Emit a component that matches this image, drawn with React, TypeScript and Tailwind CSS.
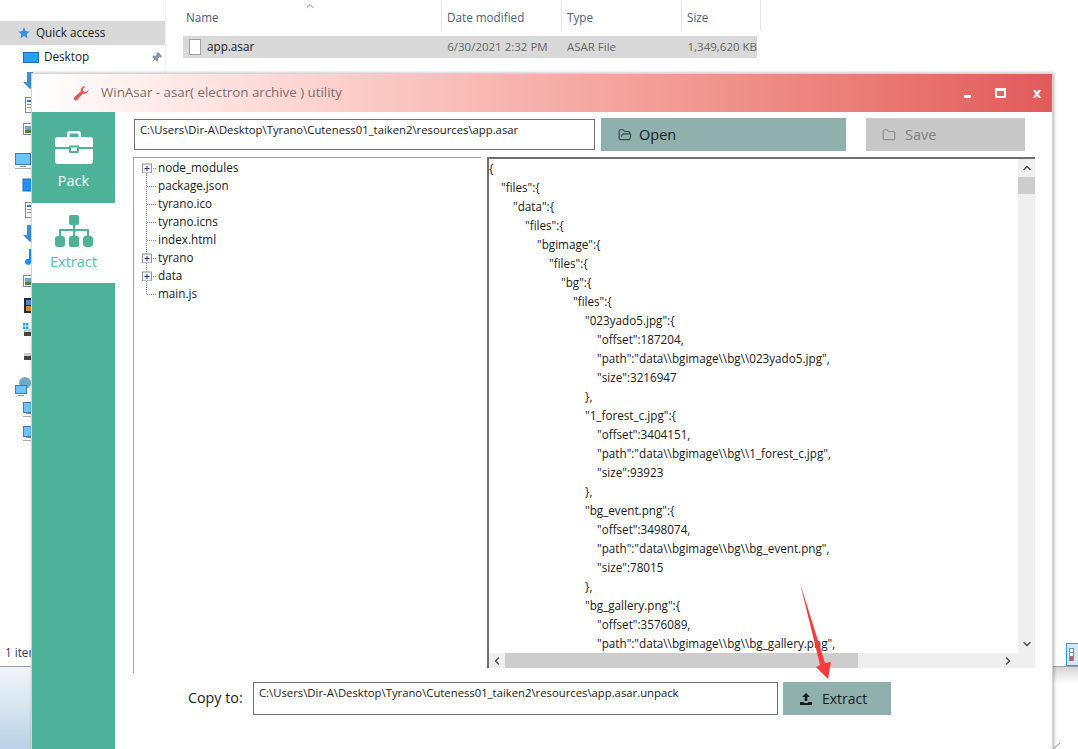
import { Folder, FolderOpen, Pin, ChevronLeft, ChevronRight, ChevronUp, ChevronDown } from "lucide-react";

const TREE = [
  { name: "node_modules", plus: true },
  { name: "package.json" },
  { name: "tyrano.ico" },
  { name: "tyrano.icns" },
  { name: "index.html" },
  { name: "tyrano", plus: true },
  { name: "data", plus: true },
  { name: "main.js" },
];

const JSON_LINES: [number, string][] = [
  [0, "{"],
  [1, '"files":{'],
  [2, '"data":{'],
  [3, '"files":{'],
  [4, '"bgimage":{'],
  [5, '"files":{'],
  [6, '"bg":{'],
  [7, '"files":{'],
  [8, '"023yado5.jpg":{'],
  [9, '"offset":187204,'],
  [9, '"path":"data\\\\bgimage\\\\bg\\\\023yado5.jpg",'],
  [9, '"size":3216947'],
  [8, "},"],
  [8, '"1_forest_c.jpg":{'],
  [9, '"offset":3404151,'],
  [9, '"path":"data\\\\bgimage\\\\bg\\\\1_forest_c.jpg",'],
  [9, '"size":93923'],
  [8, "},"],
  [8, '"bg_event.png":{'],
  [9, '"offset":3498074,'],
  [9, '"path":"data\\\\bgimage\\\\bg\\\\bg_event.png",'],
  [9, '"size":78015'],
  [8, "},"],
  [8, '"bg_gallery.png":{'],
  [9, '"offset":3576089,'],
  [9, '"path":"data\\\\bgimage\\\\bg\\\\bg_gallery.png",'],
];

// the nav pane icons that stick out left of the WinAsar window
function NavIconStrip() {
  const arrow = (y: number) => (
    <path d={`M12 ${y}h6v14l-3 3-7-7h4z`} fill="#3d8fd9" />
  );
  const doc = (y: number) => (
    <g>
      <rect x="10.500" y={y + 0.5} width="8" height="15" fill="#fff" stroke="#8a8a8a" />
      <rect x="12" y={y + 3} width="6" height="2" fill="#2a7fd0" />
      <rect x="12" y={y + 7} width="6" height="1" fill="#8a94a0" />
      <rect x="12" y={y + 10} width="6" height="1" fill="#8a94a0" />
    </g>
  );
  const picture = (y: number) => (
    <g>
      <rect x="8.500" y={y + 0.5} width="10" height="11" fill="#fff" stroke="#8a8a8a" />
      <rect x="10" y={y + 3} width="8" height="4" fill="#6fa8c8" />
      <rect x="10" y={y + 7} width="8" height="3" fill="#5a7a4a" />
    </g>
  );
  const pc = (y: number) => (
    <g>
      <rect x="8.500" y={y + 0.5} width="10" height="10" fill="#6cc4f8" stroke="#3d7fb0" />
      <rect x="11" y={y + 11} width="7" height="1" fill="#8a94a0" />
      <rect x="8" y={y + 14} width="10" height="1" fill="#a8b0b8" />
    </g>
  );
  return (
    <svg width="17" height="375" viewBox="0 0 17 375" className="ml-[15px] overflow-visible">
      {arrow(3)}
      {doc(28)}
      {picture(54)}
      <rect x="0.500" y="84.500" width="15" height="11" fill="#6cc4f8" stroke="#3d7fb0" />
      <rect x="5" y="97" width="6" height="1" fill="#8a94a0" />
      <rect x="0" y="99" width="16" height="1" fill="#a8b0b8" />
      <rect x="8" y="110" width="10" height="12" fill="#1e90ff" stroke="#1a6fc0" />
      {doc(133)}
      {arrow(156)}
      <path d="M14 180h2v13a3 3 0 1 1-2-3z" fill="#1e90ff" />
      {picture(206)}
      <rect x="9" y="229" width="9" height="15" fill="#2b2b2b" />
      <rect x="11" y="231" width="6" height="5" fill="#4a8ad0" />
      <rect x="11" y="237" width="6" height="5" fill="#d08a3a" />
      <rect x="8" y="254" width="2.500" height="2.500" fill="#14a8f5" />
      <rect x="11" y="254" width="2.500" height="2.500" fill="#14a8f5" />
      <rect x="8" y="257.500" width="2.500" height="2.500" fill="#14a8f5" />
      <rect x="11" y="257.500" width="2.500" height="2.500" fill="#14a8f5" />
      <rect x="9" y="260" width="9" height="3" fill="#d0d0d0" />
      <rect x="9" y="263" width="9" height="4" fill="#444444" />
      <rect x="9" y="284" width="9" height="3" fill="#d0d0d0" />
      <rect x="9" y="287" width="9" height="4" fill="#444444" />
      <circle cx="10" cy="314" r="6" fill="#6fa8c8" />
      <rect x="0.500" y="316.500" width="11" height="8" fill="#6cc4f8" stroke="#3d7fb0" />
      <rect x="3" y="326" width="6" height="1" fill="#8a94a0" />
      {pc(333)}
      {pc(357)}
    </svg>
  );
}

function Explorer() {
  return (
    <div className="flex h-[667px] flex-col border-b border-[#a0a0a0] bg-white">
      <div className="flex min-h-0 flex-1">
        <div className="w-[165px] shrink-0 pt-[21px]">
          <div className="flex h-6 items-center gap-[5px] bg-[#d9d9d9] pl-[17px] text-[11.7px] text-[#1a1a1a]">
            <svg width="14" height="14" viewBox="0 0 24 24" className="fill-[#3d8fd9]">
              <path d="M12 2l3 7 7 .6-5.400 4.700 1.700 7L12 17l-6.300 4.300 1.700-7L2 9.600l7-.6z" />
            </svg>
            Quick access
          </div>
          <div className="flex h-6 items-center gap-[5px] pl-[23px] pr-[3px] text-[11.7px] text-[#1a1a1a]">
            <span className="h-[11px] w-[16px] border border-[#1a6fc0] bg-[#2a9df4]" />
            <span className="flex-1">Desktop</span>
            <Pin size={11} className="rotate-45 fill-[#8a94a0] text-[#8a94a0]" />
          </div>
          <NavIconStrip />
        </div>
        <div className="flex-1 border-l border-[#f0f0f0] pl-[17px]">
          <div className="flex h-[31px] text-[11.7px] text-[#4c607a]">
            <div className="relative w-[258px] pl-[3px] pt-[9px]">
              Name
              <ChevronUp size={12} className="absolute left-[121px] top-0 text-[#808080]" />
            </div>
            <div className="w-[120px] border-l border-[#e5e5e5] pl-[5px] pt-[9px]">Date modified</div>
            <div className="w-[120px] border-l border-[#e5e5e5] pl-[5px] pt-[9px]">Type</div>
            <div className="w-[80px] border-x border-[#e5e5e5] pl-[5px] pt-[9px]">Size</div>
          </div>
          <div className="mt-[5px] flex h-[22px] w-[574px] items-center whitespace-nowrap bg-[#d9d9d9] text-[11.5px] text-[#666666]">
            <div className="flex w-[259px] items-center gap-[6px] pl-[6px] text-[11.7px] text-[#1a1a1a]">
              <span className="h-4 w-3 border border-[#a0a0a0] bg-white" />
              app.asar
            </div>
            <div className="w-[120px] pl-[6px]">6/30/2021 2:32 PM</div>
            <div className="w-[121px] pl-[6px]">ASAR File</div>
            <div className="pl-[6px]">1,349,620 KB</div>
          </div>
        </div>
      </div>
      <div className="flex h-[26px] items-end justify-between pl-[5px] text-[11.7px] text-[#3b3b6b]">
        <span className="pb-[4px]">1 item</span>
        <span className="flex h-[23px] w-[12px] flex-col items-start justify-center gap-px border-y border-l border-[#2a9df4] bg-[#cde8f7] pl-[3px]">
          <span className="h-[3px] w-[3px] bg-white outline outline-1 outline-[#8a8a8a]" />
          <span className="h-[3px] w-[3px] bg-white outline outline-1 outline-[#8a8a8a]" />
          <span className="h-[3px] w-[3px] bg-[#d05050] outline outline-1 outline-[#8a8a8a]" />
        </span>
      </div>
    </div>
  );
}

function PackIcon() {
  return (
    <svg width="38" height="33" viewBox="0 0 38 33" className="fill-white">
      <path d="M12 6V3a3 3 0 0 1 3-3h8a3 3 0 0 1 3 3v3h-2.500V3.500a1 1 0 0 0-1-1h-7a1 1 0 0 0-1 1V6z" />
      <path d="M3 6h32a3 3 0 0 1 3 3v7H24v-1.500H14V16H0V9a3 3 0 0 1 3-3z" />
      <path d="M0 18h14v2.500a1.500 1.500 0 0 0 1.500 1.500h7a1.500 1.500 0 0 0 1.500-1.500V18h14v12a3 3 0 0 1-3 3H3a3 3 0 0 1-3-3z" />
      <rect x="16" y="16.500" width="6" height="3.500" />
    </svg>
  );
}

function ExtractIcon() {
  return (
    <svg width="38" height="33" viewBox="0 0 38 33" className="fill-[#4db297]">
      <rect x="14" y="0" width="10" height="10" rx="2" />
      <rect x="0" y="21" width="10" height="11" rx="3" />
      <rect x="14" y="21" width="10" height="11" rx="2" />
      <rect x="28" y="21" width="10" height="11" rx="3" />
      <path d="M18 10h2v4h13a1 1 0 0 1 1 1v6h-2v-5H20v5h-2v-5H6v5H4v-6a1 1 0 0 1 1-1h13z" />
    </svg>
  );
}

function Sidebar() {
  return (
    <div className="flex w-[83px] shrink-0 flex-col bg-[#4db297]">
      <div className="flex h-[91px] flex-col items-center pt-[19px] text-[14.5px] text-white">
        <PackIcon />
        <span className="mt-[7px] leading-5">Pack</span>
      </div>
      <div className="flex h-[80px] flex-col items-center bg-white pt-[12px] text-[14.5px] text-[#54c0ae]">
        <ExtractIcon />
        <span className="mt-[4px] leading-5">Extract</span>
      </div>
    </div>
  );
}

function TreeConnector({ plus }: { plus?: boolean }) {
  return (
    <svg width="14" height="10" viewBox="0 0 14 10" className="mr-[2px] shrink-0">
      <path d="M5 5.500h9" stroke="#808080" strokeDasharray="1 1" />
      {plus && (
        <>
          <rect x="0.500" y="1" width="9" height="9" fill="#f4f4f8" stroke="#8a94a8" />
          <path d="M2.500 5.500h5M5 3v5" stroke="#203a80" />
        </>
      )}
    </svg>
  );
}

function FileTree() {
  return (
    <div className="relative h-[516px] w-[348px] border-l border-t border-[#a0a0a0] pl-[8px] pt-[1px] text-[11.7px] text-[#1a1a1a]">
      <span className="absolute left-[12px] top-[15px] h-[121px] border-l border-dotted border-[#808080]" />
      {TREE.map((item) => (
        <div key={item.name} className="relative flex h-[18px] items-center">
          <TreeConnector plus={item.plus} />
          <span>{item.name}</span>
        </div>
      ))}
    </div>
  );
}

function JsonPane() {
  return (
    <div className="flex h-[511px] w-[548px] flex-col border-l-2 border-t-2 border-[#6e6e6e] border-b-[#e8e8e8] border-r-[#e8e8e8]">
      <div className="flex min-h-0 flex-1">
        <div className="min-w-0 flex-1 overflow-hidden text-[11.7px] text-[#1a1a1a]">
          {JSON_LINES.map(([level, text], i) => (
            <div key={i} className="flex h-[19px] items-center whitespace-pre" style={{ paddingLeft: level * 12 }}>
              {text}
            </div>
          ))}
        </div>
        <div className="flex w-[17px] shrink-0 flex-col items-center bg-[#efefef]">
          <ChevronUp size={12} strokeWidth={3} className="my-[3px] text-[#505050]" />
          <span className="h-[17px] w-full bg-[#cdcdcd]" />
          <span className="flex-1" />
          <ChevronDown size={12} strokeWidth={3} className="mb-[3px] text-[#505050]" />
        </div>
      </div>
      <div className="flex h-[15px] shrink-0 items-center bg-[#efefef]">
        <ChevronLeft size={12} strokeWidth={3} className="mx-[2px] shrink-0 text-[#505050]" />
        <span className="h-full w-[353px] bg-[#cdcdcd]" />
        <span className="flex-1" />
        <ChevronRight size={12} strokeWidth={3} className="mr-[21px] shrink-0 text-[#505050]" />
      </div>
    </div>
  );
}

function ExtractGlyph() {
  return (
    <svg width="12" height="12" viewBox="0 0 12 12" className="mr-[10px] fill-[#1a1a1a]">
      <path d="M6 0l4 4H7.300v4H4.700V4H2z" />
      <path d="M0 9h3.500l.8 1h3.400l.8-1H12v3H0z" />
    </svg>
  );
}

function Window() {
  return (
    <div className="absolute left-[31px] top-[73px] flex h-[680px] w-[1022px] flex-col border border-[#d4d4d4] bg-white shadow-[1px_0_3px_rgba(0,0,0,0.3)]">
      <div className="flex h-[38px] shrink-0 items-center bg-gradient-to-r from-white to-[#e05a58] pl-[41px] text-[13.300px] text-[#7a6e70]">
        <svg width="17" height="17" viewBox="0 0 24 24" className="fill-[#e05a58]">
          <path d="M22 6.500a6 6 0 0 1-8 5.700L6 21a2.800 2.800 0 0 1-4-4l8.800-8A6 6 0 0 1 17.500 2L14 5.500l1 3.500 3.500 1L22 6.500z" />
        </svg>
        <span className="ml-[11px] flex-1">WinAsar - asar( electron archive ) utility</span>
        <div className="flex items-center pr-[11px]">
          <span className="mr-[24px] mt-[7px] h-[3px] w-[7px] bg-white" />
          <span className="mr-[27px] h-[10px] w-[11px] border-2 border-t-[3px] border-white" />
          <span className="text-[14px] font-bold leading-none text-white">x</span>
        </div>
      </div>
      <div className="flex min-h-0 flex-1">
        <Sidebar />
        <div className="flex min-w-0 flex-1 flex-col pl-[18px]">
          <div className="ml-[1px] flex h-[45px] items-start pt-[6px]">
            <div className="mt-[1px] h-[31px] w-[461px] border border-[#707070] pl-[5px] pt-[2px] text-[11.300px] text-[#1a1a1a]">
              C:\Users\Dir-A\Desktop\Tyrano\Cuteness01_taiken2\resources\app.asar
            </div>
            <button className="ml-[6px] flex h-[33px] w-[245px] items-center bg-[#8fb0ad] pl-[17px] text-[14.500px] text-[#1a1a1a]">
              <FolderOpen size={14} className="mr-[7px] text-[#3a4a4a]" />
              Open
            </button>
            <button className="ml-[20px] flex h-[33px] w-[159px] items-center bg-[#c8c8c8] pl-[16px] text-[14.500px] text-[#808080]">
              <Folder size={14} className="mr-[9px] text-[#909090]" />
              Save
            </button>
          </div>
          <div className="flex gap-[6px]">
            <FileTree />
            <JsonPane />
          </div>
          <div className="mt-[4px] flex items-start pl-[55px] pt-[5px]">
            <span className="w-[65px] pt-[5px] text-[14.300px] text-[#1a1a1a]">Copy to:</span>
            <div className="h-[33px] w-[525px] border border-[#707070] pl-[5px] pt-[2px] text-[11.300px] text-[#1a1a1a]">
              C:\Users\Dir-A\Desktop\Tyrano\Cuteness01_taiken2\resources\app.asar.unpack
            </div>
            <button className="ml-[5px] flex h-[33px] w-[108px] items-center bg-[#8fb0ad] pl-[17px] text-[14px] text-[#1a1a1a]">
              <ExtractGlyph />
              Extract
            </button>
          </div>
        </div>
      </div>
    </div>
  );
}

export default function App() {
  return (
    <div className="relative h-[749px] w-[1078px] overflow-hidden font-['Open_Sans','Noto_Sans',sans-serif]">
      <Explorer />
      {/* wallpaper below the explorer window */}
      <div className="flex h-[82px]">
        <div className="w-[32px] bg-gradient-to-b from-[#f2f6f9] to-[#b9d2e5]" />
        <div className="flex-1 bg-gradient-to-b from-[#d4d4d4] via-white via-[20%] to-white" />
      </div>
      <Window />
      {/* resize grip peeking out at the bottom right */}
      <svg width="8" height="7" viewBox="0 0 8 7" className="absolute left-[1053px] top-[742px]">
        <path d="M0 7l7-6" stroke="#909090" />
      </svg>
      {/* red annotation arrow */}
      <svg width="40" height="110" viewBox="0 0 40 110" className="absolute left-[795px] top-[580px] fill-[#fb3b3b]">
        <path d="M5 3L30 83L36 82L33 99L21 87L25 85Z" />
      </svg>
    </div>
  );
}
